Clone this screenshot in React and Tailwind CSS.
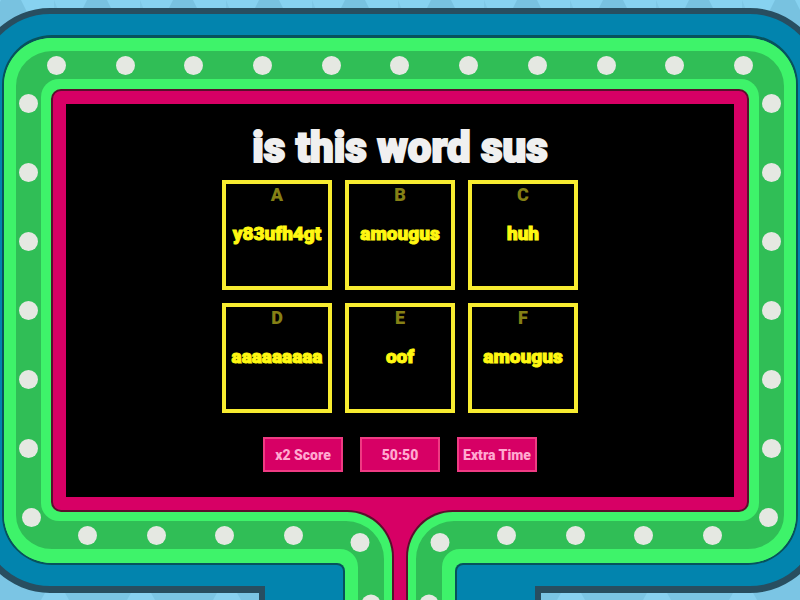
import React from 'react'

const answers = [
  { letter: 'A', text: 'y83ufh4gt' },
  { letter: 'B', text: 'amougus' },
  { letter: 'C', text: 'huh' },
  { letter: 'D', text: 'aaaaaaaaa' },
  { letter: 'E', text: 'oof' },
  { letter: 'F', text: 'amougus' },
]

const lifelines = ['x2 Score', '50:50', 'Extra Time']

const Bulb = ({ className = '' }) => (
  <span className={`block size-[19px] shrink-0 rounded-full bg-[#e5e8e2] ${className}`} />
)

const BulbRow = ({ count, className }) => (
  <div className={`flex items-center justify-between ${className}`}>
    {Array.from({ length: count }, (_, i) => (
      <Bulb key={i} />
    ))}
  </div>
)

// Side bulbs, the last one leans in towards the corner
const BulbColumn = ({ last }) => (
  <div className="-mb-[6px] flex flex-col items-center justify-between pt-[15px]">
    {Array.from({ length: 6 }, (_, i) => (
      <Bulb key={i} />
    ))}
    <Bulb className={last} />
  </div>
)

// Triangle pattern of the sky behind the sign
const Sky = () => (
  <svg className="absolute inset-0 h-full w-full" aria-hidden="true">
    <defs>
      <pattern id="sky-top" width="86" height="90" patternUnits="userSpaceOnUse" x="54">
        <rect width="86" height="90" fill="#87d2f0" />
        <path d="M43 -20 L83 60 H3Z" fill="#78c2e0" />
        <path d="M0 0 L4 10 V90 H0Z" fill="#7fc9e7" />
      </pattern>
      <pattern id="sky-bottom" width="86" height="100" patternUnits="userSpaceOnUse" x="12">
        <rect width="86" height="100" fill="#7bc5e4" />
        <path d="M38 84 H48 L57 100 H29Z" fill="#88d1f0" />
      </pattern>
    </defs>
    <rect width="100%" height="100%" fill="url(#sky-bottom)" />
    <rect width="100%" height="90" fill="url(#sky-top)" />
  </svg>
)

// One half of the stand, the other half is mirrored
const StandArm = () => (
  <g>
    <path d="M330 510H347A47 47 0 0 1 394 557V600H330Z" fill="#5a0f2c" />
    <path d="M330 512H347A45 45 0 0 1 392 557V600H330Z" fill="#3ef36a" />
    <path d="M330 521H346A38 38 0 0 1 384 559V600H358V567A18 18 0 0 0 340 549H330Z" fill="#30be56" />
    <path d="M330 563H337A8 8 0 0 1 345 571V600H330Z" fill="#07525c" />
    <path d="M330 565H337A6 6 0 0 1 343 571V600H330Z" fill="#0284ae" />
    <circle cx="360" cy="542.5" r="9.5" fill="#e5e8e2" />
    <circle cx="371" cy="604" r="9.5" fill="#e5e8e2" />
  </g>
)

const Stand = () => (
  <svg
    className="absolute bottom-0 left-1/2 -translate-x-1/2"
    width="282"
    height="102"
    viewBox="259 498 282 102"
    aria-hidden="true"
  >
    <path d="M259 586H541V600H259Z" fill="#284e60" />
    <path d="M265 575H535V600H265Z" fill="#0284ae" />
    <path d="M330 498H470V600H330Z" fill="#d70065" />
    <StandArm />
    <g transform="translate(800 0) scale(-1 1)">
      <StandArm />
    </g>
  </svg>
)

const Answer = ({ letter, text }) => (
  <button className="grid size-[110px] grid-rows-[1fr_auto_1fr] justify-items-center border-4 border-[#f8ec30] pt-px pb-1 hover:bg-[#2b2900]">
    <span className="text-[18px] leading-5 text-[#858015]">{letter}</span>
    <span className="text-[19px] leading-6 text-[#fff712] [-webkit-text-stroke:1px]">{text}</span>
  </button>
)

const Screen = () => (
  <main className="flex flex-1 flex-col items-center bg-black pt-[23px] pb-6">
    <h1 className="text-[42px] leading-[42px] text-[#f0f0f0] [-webkit-text-stroke:2px]">is this word sus</h1>
    <div className="mt-[11px] grid grid-cols-3 gap-[13px]">
      {answers.map((a) => (
        <Answer key={a.letter} letter={a.letter} text={a.text} />
      ))}
    </div>
    <div className="mt-6 flex gap-[17px]">
      {lifelines.map((name) => (
        <button
          key={name}
          className="h-[35px] w-20 border-2 border-[#ef3b83] bg-[#d70065] text-[14px] leading-5 whitespace-nowrap text-[#ffa9d0]"
        >
          {name}
        </button>
      ))}
    </div>
  </main>
)

export default function App() {
  return (
    <div className="relative flex min-h-screen flex-col overflow-hidden pt-2 pb-[7px] font-['Roboto',sans-serif] font-black">
      <Sky />
      <div className="relative -mx-[25px] flex flex-1 flex-col rounded-[75px] border-x-[6px] border-t-[6px] border-b-[7px] border-[#284e60] bg-[#0284ae] px-[21px] py-[21px]">
        <div className="flex flex-1 flex-col rounded-[50px] border-x-2 border-t-[3px] border-b-2 border-[#07525c] bg-[#3ef36a]">
          <div className="grid flex-1 grid-cols-[25px_1fr_25px] grid-rows-[28px_1fr_28px] rounded-[48px] border-x-[12px] border-t-[13px] border-b-[14px] border-[#3ef36a] bg-[#30be56]">
            <BulbRow count={11} className="col-span-3 px-[31px]" />
            <BulbColumn last="self-end" />
            <div className="flex flex-col rounded-[18px] bg-[#3ef36a] px-[10px] pt-[10px] pb-[9px]">
              <div className="flex flex-1 flex-col rounded-[10px] border-2 border-[#5a0f2c] bg-[#d70065] p-[13px]">
                <Screen />
              </div>
            </div>
            <BulbColumn last="self-start" />
            <div className="col-span-3 flex justify-between px-[62px]">
              <BulbRow count={4} className="w-[225px]" />
              <BulbRow count={4} className="w-[225px]" />
            </div>
          </div>
        </div>
      </div>
      <Stand />
    </div>
  )
}
